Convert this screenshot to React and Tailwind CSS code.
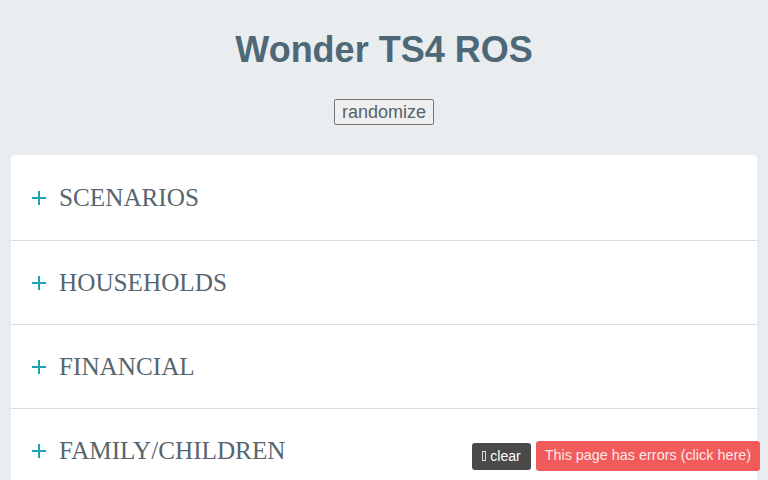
import React from 'react';

const sections = ['SCENARIOS', 'HOUSEHOLDS', 'FINANCIAL', 'FAMILY/CHILDREN'];

function PlusIcon() {
  return (
    <svg width="16" height="16" viewBox="0 0 16 16" className="shrink-0">
      <path d="M8 1v14M1 8h14" stroke="#1aa3b5" strokeWidth="2" fill="none" />
    </svg>
  );
}

export default function App() {
  return (
    <div className="min-h-screen bg-[#e9edf0] font-['Liberation_Sans',Arial,sans-serif] px-[11px]">
      <h1 className="pt-[27px] text-center text-[36px] font-bold leading-[46px] text-[#4e6877]">
        Wonder TS4 ROS
      </h1>

      <div className="flex justify-center mt-[26px]">
        <button className="h-[26px] px-[7px] border border-[#767676] rounded-[2px] bg-[#efefef] text-[18px] leading-[20px] text-[#55626b]">
          randomize
        </button>
      </div>

      {/* accordion */}
      <div className="mt-[30px] bg-white rounded-[4px] overflow-hidden">
        {sections.map((name, i) => (
          <div
            key={name}
            className={`flex items-center gap-[12px] pl-[20px] ${i > 0 ? 'h-[84px] border-t border-[#d9dde0]' : 'h-[85px]'}`}
          >
            <PlusIcon />
            <span className="font-['Liberation_Serif','Times_New_Roman',serif] text-[25.2px] text-[#56656e]">
              {name}
            </span>
          </div>
        ))}
      </div>

      {/* error badges */}
      <div className="fixed right-[8px] bottom-[9px] flex items-center gap-[5px]">
        <button className="flex items-center gap-[4px] h-[27px] pl-[10px] pr-[10px] rounded-[3px] bg-[#4a4a4a] text-[14px] text-white">
          <span className="inline-block w-[4px] h-[10px] border border-white/80" />
          clear
        </button>
        <button className="h-[30px] px-[9px] rounded-[3px] bg-[#f25b5b] text-[14.4px] text-[#fde8e8]">
          This page has errors (click here)
        </button>
      </div>
    </div>
  );
}
